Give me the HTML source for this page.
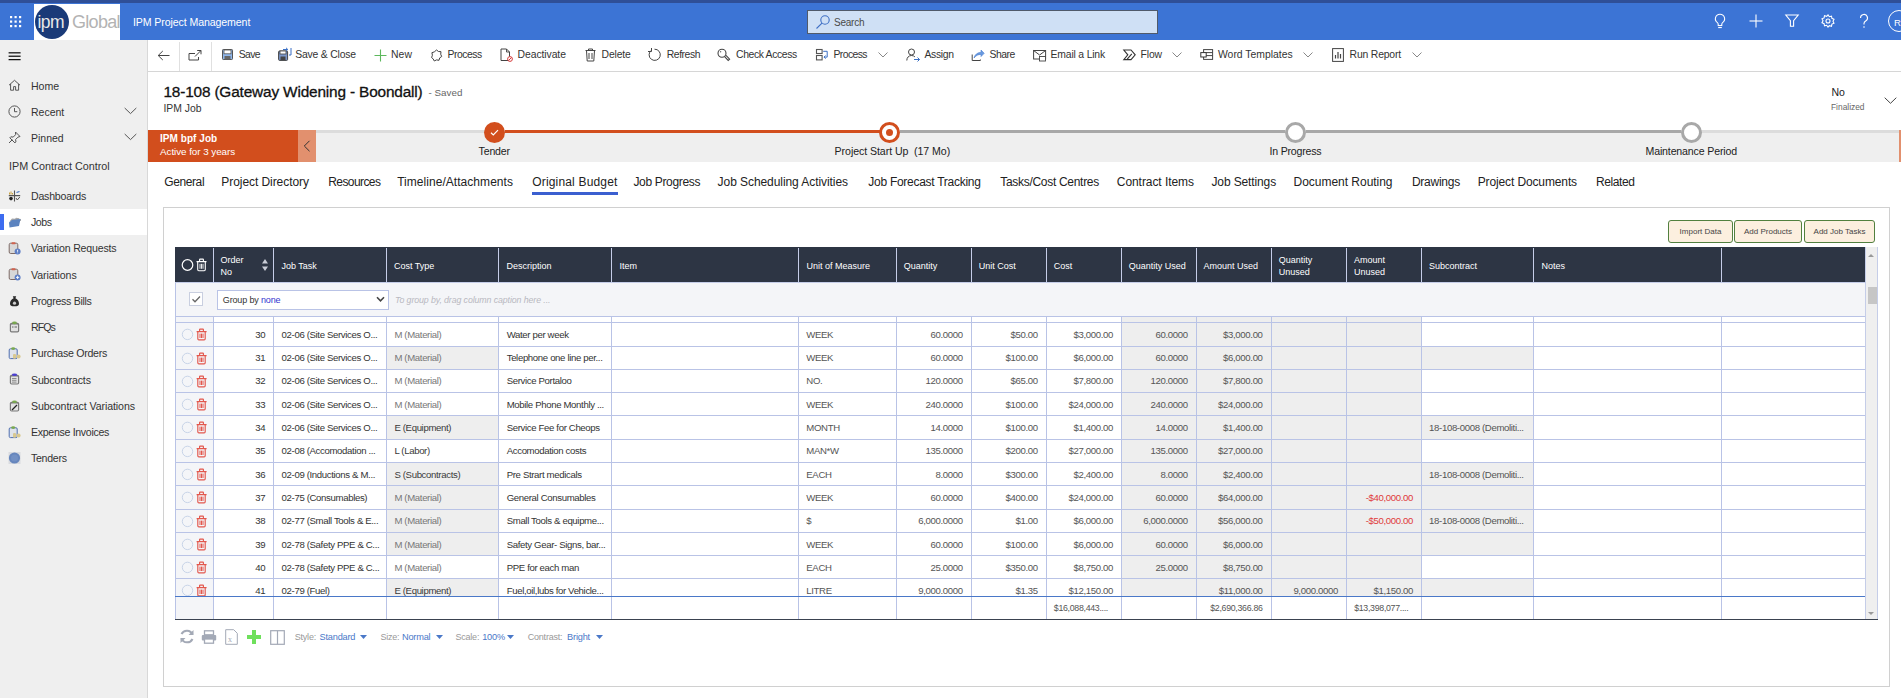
<!DOCTYPE html><html><head><meta charset="utf-8"><style>
html,body{margin:0;padding:0;width:1901px;height:698px;overflow:hidden;background:#fff;font-family:"Liberation Sans",sans-serif;}
.a{position:absolute;}
.t{position:absolute;height:20px;line-height:20px;white-space:nowrap;}
svg.a{overflow:visible}
</style></head><body>
<div class="a" style="left:0px;top:0px;width:1901px;height:40px;background:#3c74d5"></div>
<div class="a" style="left:0px;top:0px;width:1901px;height:3px;background:#2f4f97"></div>
<svg class="a" style="left:0px;top:0px;" width="34" height="40" viewBox="0 0 34 40"><rect x="10.0" y="16.0" width="2.2" height="2.2" fill="#fff"/><rect x="10.0" y="20.5" width="2.2" height="2.2" fill="#fff"/><rect x="10.0" y="25.0" width="2.2" height="2.2" fill="#fff"/><rect x="14.5" y="16.0" width="2.2" height="2.2" fill="#fff"/><rect x="14.5" y="20.5" width="2.2" height="2.2" fill="#fff"/><rect x="14.5" y="25.0" width="2.2" height="2.2" fill="#fff"/><rect x="19.0" y="16.0" width="2.2" height="2.2" fill="#fff"/><rect x="19.0" y="20.5" width="2.2" height="2.2" fill="#fff"/><rect x="19.0" y="25.0" width="2.2" height="2.2" fill="#fff"/></svg>
<div class="a" style="left:34px;top:4px;width:86px;height:36px;background:#fff"></div>
<div class="a" style="left:35px;top:5px;width:34px;height:34px;background:#1a3a78;border-radius:50%"></div>
<div class="t" style="left:37.5px;top:12.00px;font-size:17.5px;color:#e8e8e8;font-weight:normal;letter-spacing:-0.6px;">ipm</div>
<div class="t" style="left:72px;top:11.80px;font-size:18px;color:#b3b3b3;font-weight:normal;letter-spacing:-0.7px;">Global</div>
<div class="a" style="left:120px;top:3px;width:13px;height:37px;background:#3c74d5"></div>
<div class="t" style="left:133px;top:11.70px;font-size:10.6px;color:#ffffff;font-weight:normal;letter-spacing:-0.104px;">IPM Project Management</div>
<div class="a" style="left:807px;top:10px;width:349px;height:22px;background:#cfe0f5;border:1px solid #505a6a"></div>
<svg class="a" style="left:814px;top:14px;" width="18" height="16" viewBox="0 0 18 16"><circle cx="11" cy="6" r="4.2" fill="none" stroke="#3e6fc4" stroke-width="1.1"/><line x1="8" y1="9.2" x2="2.5" y2="14.5" stroke="#3e6fc4" stroke-width="1.1"/></svg>
<div class="t" style="left:834px;top:12.80px;font-size:10px;color:#4a4a4a;font-weight:normal;letter-spacing:-0.247px;">Search</div>
<svg class="a" style="left:1713px;top:13px;" width="14" height="16" viewBox="0 0 14 16"><path d="M7 1.2a4.6 4.6 0 0 0-2.6 8.4c.5.4.8 1 .8 1.6v1.3h3.6v-1.3c0-.6.3-1.2.8-1.6A4.6 4.6 0 0 0 7 1.2z" fill="none" stroke="#fff" stroke-width="1.1"/><line x1="5.2" y1="14.5" x2="8.8" y2="14.5" stroke="#fff" stroke-width="1.2"/></svg>
<svg class="a" style="left:1749px;top:14px;" width="14" height="14" viewBox="0 0 14 14"><line x1="7" y1="0.5" x2="7" y2="13.5" stroke="#fff" stroke-width="1.1"/><line x1="0.5" y1="7" x2="13.5" y2="7" stroke="#fff" stroke-width="1.1"/></svg>
<svg class="a" style="left:1785px;top:14px;" width="14" height="14" viewBox="0 0 14 14"><path d="M0.8 1h12.4l-4.6 5.6v5.6h-3.2v-5.6z" fill="none" stroke="#fff" stroke-width="1.1"/></svg>
<svg class="a" style="left:1821px;top:14px;" width="14" height="14" viewBox="0 0 14 14"><circle cx="7" cy="7" r="2" fill="none" stroke="#fff" stroke-width="1.1"/><path d="M7 0.8l1.3 1.9 2.2-.6.4 2.2 2.1.9-1 2 1 2-2.1.9-.4 2.2-2.2-.6L7 13.2l-1.3-1.9-2.2.6-.4-2.2-2.1-.9 1-2-1-2 2.1-.9.4-2.2 2.2.6z" fill="none" stroke="#fff" stroke-width="1.1"/></svg>
<svg class="a" style="left:1859px;top:14px;" width="10" height="14" viewBox="0 0 10 14"><path d="M1.5 4a3.5 3.5 0 1 1 5.2 3c-1 .6-1.7 1.2-1.7 2.5v1" fill="none" stroke="#fff" stroke-width="1.1"/><circle cx="5" cy="13" r=".8" fill="#fff"/></svg>
<div class="a" style="left:1888px;top:10px;width:22px;height:22px;border:1.3px solid #fff;border-radius:50%;box-sizing:border-box"></div>
<div class="t" style="left:1894px;top:12.50px;font-size:9.5px;color:#fff;font-weight:normal;">R</div>
<div class="a" style="left:0px;top:40px;width:147px;height:658px;background:#efefef"></div>
<div class="a" style="left:147px;top:40px;width:1px;height:658px;background:#d8d8d8"></div>
<svg class="a" style="left:8px;top:50px;" width="14" height="12" viewBox="0 0 14 12"><rect x="0.6" y="2.2" width="12" height="1.25" fill="#111"/><rect x="0.6" y="5.6" width="12" height="1.25" fill="#111"/><rect x="0.6" y="9" width="12" height="1.25" fill="#111"/></svg>
<svg class="a" style="left:8px;top:79px;" width="13" height="12" viewBox="0 0 13 12"><path d="M1 6.2L6.5 1.3 12 6.2M2.6 5v6.2h3v-3.6h2v3.6h3V5" fill="none" stroke="#555" stroke-width="1"/></svg>
<div class="t" style="left:31px;top:75.50px;font-size:10.6px;color:#333;font-weight:normal;letter-spacing:-0.043px;">Home</div>
<svg class="a" style="left:8px;top:105px;" width="13" height="13" viewBox="0 0 13 13"><circle cx="6.5" cy="6.5" r="5.6" fill="none" stroke="#555" stroke-width="1"/><path d="M6.5 3v3.7h2.8" fill="none" stroke="#555" stroke-width="1"/></svg>
<div class="t" style="left:31px;top:101.50px;font-size:10.5px;color:#333;font-weight:normal;">Recent</div>
<svg class="a" style="left:124px;top:107px;" width="13" height="8" viewBox="0 0 13 8"><path d="M0.7 1L6.5 6.6 12.3 1" fill="none" stroke="#555" stroke-width="1"/></svg>
<svg class="a" style="left:8px;top:131px;" width="13" height="13" viewBox="0 0 13 13"><path d="M7.5 1l4.5 4.5-2 .6-2.4 2.4.3 2.4-1 1L1.8 6.8l1-1 2.4.3 2.4-2.4zM4.3 8.7L1 12" fill="none" stroke="#555" stroke-width="1"/></svg>
<div class="t" style="left:31px;top:127.50px;font-size:10.5px;color:#333;font-weight:normal;">Pinned</div>
<svg class="a" style="left:124px;top:133px;" width="13" height="8" viewBox="0 0 13 8"><path d="M0.7 1L6.5 6.6 12.3 1" fill="none" stroke="#555" stroke-width="1"/></svg>
<div class="t" style="left:9px;top:156.30px;font-size:10.8px;color:#333;font-weight:normal;letter-spacing:-0.007px;">IPM Contract Control</div>
<div class="a" style="left:0px;top:209px;width:147px;height:26px;background:#ffffff"></div>
<div class="a" style="left:0px;top:214px;width:4px;height:16px;background:#3d6cf0"></div>
<div class="t" style="left:31px;top:186.20px;font-size:10.6px;color:#333;font-weight:normal;letter-spacing:-0.215px;">Dashboards</div>
<div class="t" style="left:31px;top:212.30px;font-size:10.6px;color:#333;font-weight:normal;letter-spacing:-0.422px;">Jobs</div>
<div class="t" style="left:31px;top:238.40px;font-size:10.6px;color:#333;font-weight:normal;letter-spacing:-0.182px;">Variation Requests</div>
<div class="t" style="left:31px;top:264.60px;font-size:10.6px;color:#333;font-weight:normal;letter-spacing:-0.064px;">Variations</div>
<div class="t" style="left:31px;top:291.00px;font-size:10.6px;color:#333;font-weight:normal;letter-spacing:-0.299px;">Progress Bills</div>
<div class="t" style="left:31px;top:317.20px;font-size:10.6px;color:#333;font-weight:normal;letter-spacing:-0.918px;">RFQs</div>
<div class="t" style="left:31px;top:343.40px;font-size:10.6px;color:#333;font-weight:normal;letter-spacing:-0.274px;">Purchase Orders</div>
<div class="t" style="left:31px;top:369.60px;font-size:10.6px;color:#333;font-weight:normal;letter-spacing:-0.172px;">Subcontracts</div>
<div class="t" style="left:31px;top:396.00px;font-size:10.6px;color:#333;font-weight:normal;letter-spacing:-0.084px;">Subcontract Variations</div>
<div class="t" style="left:31px;top:422.20px;font-size:10.6px;color:#333;font-weight:normal;letter-spacing:-0.317px;">Expense Invoices</div>
<div class="t" style="left:31px;top:448.40px;font-size:10.6px;color:#333;font-weight:normal;letter-spacing:-0.287px;">Tenders</div>
<svg class="a" style="left:8px;top:190px;" width="13" height="13" viewBox="0 0 13 13"><path d="M6.5 0.5v11M0.8 5.6h11.4" stroke="#555" stroke-width="1.1"/><path d="M1.5 4.5v-2M3 4.5V1.5M4.5 4.5V3" stroke="#c8a040" stroke-width="1"/><path d="M8.5 2.5l3-1" stroke="#3a6fc4" stroke-width="1.2"/><circle cx="3" cy="8.6" r="1.8" fill="#222"/><path d="M8 8l1.3 2 2.5-3" fill="none" stroke="#555" stroke-width="1"/></svg>
<svg class="a" style="left:8px;top:216px;" width="13" height="13" viewBox="0 0 13 13"><path d="M1.5 5.5L4 2.5l3 .2 1-1 3.5.5-1.5 3z" fill="#a8a8a8"/><path d="M1 6.5l3-2.5 8.5-1L11 10 1.5 11.5z" fill="#5b83bf"/><path d="M12 2.8l.8 1.7-.6.2z" fill="#333"/></svg>
<svg class="a" style="left:8px;top:242px;" width="13" height="13" viewBox="0 0 13 13"><rect x="1.2" y="1.2" width="8.6" height="10.3" rx="1.5" fill="#d8d8d8" stroke="#7d6a66" stroke-width="1"/><rect x="3.5" y="0.3" width="4" height="2" rx="0.8" fill="#d0624e"/><circle cx="9.6" cy="9.4" r="3" fill="#5e7fc6"/><path d="M9.6 7.8v2M9.6 10.6v.6" stroke="#fff" stroke-width="0.9"/></svg>
<svg class="a" style="left:8px;top:268px;" width="13" height="13" viewBox="0 0 13 13"><rect x="1.2" y="1.2" width="8.6" height="10.3" rx="1.5" fill="#d8d8d8" stroke="#7d6a66" stroke-width="1"/><rect x="3.5" y="0.3" width="4" height="2" rx="0.8" fill="#d0624e"/><circle cx="9.6" cy="9.4" r="3" fill="#5e7fc6"/><path d="M9.6 7.8v3.2M8 9.4h3.2" stroke="#fff" stroke-width="0.9"/></svg>
<svg class="a" style="left:8px;top:295px;" width="13" height="13" viewBox="0 0 13 13"><path d="M4.8 1.2h3.4L7.4 3.3c2.4 1 3.6 3.3 3.6 5.4 0 1.8-1.4 2.6-4.5 2.6S2 10.5 2 8.7c0-2.1 1.2-4.4 3.6-5.4z" fill="#2a2a2a"/><circle cx="6.5" cy="8.2" r="1.6" fill="#cfcfcf"/></svg>
<svg class="a" style="left:8px;top:321px;" width="13" height="13" viewBox="0 0 13 13"><rect x="1.8" y="1.8" width="9.4" height="9.8" rx="1.8" fill="#7a7a7a"/><rect x="3" y="3.6" width="7" height="6.6" rx="0.6" fill="#e2e2e2"/><ellipse cx="6.5" cy="1.8" rx="2.4" ry="1.4" fill="#79a84e"/><path d="M4 6h1.5M6.5 6h2.5" stroke="#555" stroke-width="0.9"/></svg>
<svg class="a" style="left:8px;top:347px;" width="13" height="13" viewBox="0 0 13 13"><rect x="1.2" y="1.8" width="8" height="9.8" rx="1.2" fill="#dfe3ea" stroke="#4f6fb0" stroke-width="1"/><ellipse cx="5.2" cy="1.6" rx="2" ry="1.3" fill="#79a84e"/><rect x="5" y="7" width="3" height="4.8" rx="1" fill="#d8c890"/><circle cx="10.6" cy="9.6" r="2" fill="#d8c890"/></svg>
<svg class="a" style="left:8px;top:373px;" width="13" height="13" viewBox="0 0 13 13"><rect x="1.8" y="1.8" width="9.4" height="9.8" rx="1.8" fill="#7a7a7a"/><rect x="3" y="3.4" width="7" height="7" rx="0.6" fill="#e2e2e2"/><ellipse cx="6.5" cy="1.7" rx="2.6" ry="1.3" fill="#4b3fd0"/><path d="M4 5.5h4.5M4 7.3h4.5M4 9.1h4.5" stroke="#777" stroke-width="0.8"/></svg>
<svg class="a" style="left:8px;top:400px;" width="13" height="13" viewBox="0 0 13 13"><rect x="1.8" y="1.8" width="9.4" height="9.8" rx="1.8" fill="#7a7a7a"/><rect x="3" y="3.4" width="7" height="7" rx="0.6" fill="#e2e2e2"/><ellipse cx="6.5" cy="1.7" rx="2.4" ry="1.3" fill="#79a84e"/><path d="M4 10l5-5" stroke="#222" stroke-width="1.2"/></svg>
<svg class="a" style="left:8px;top:426px;" width="13" height="13" viewBox="0 0 13 13"><rect x="1.2" y="1.8" width="8" height="9.8" rx="1.2" fill="#dfe3ea" stroke="#4f6fb0" stroke-width="1"/><ellipse cx="5.2" cy="1.6" rx="2" ry="1.3" fill="#79a84e"/><rect x="5" y="7" width="3" height="4.8" rx="1" fill="#d8c890"/><circle cx="10.6" cy="9.6" r="2" fill="#d8c890"/></svg>
<svg class="a" style="left:8px;top:452px;" width="13" height="13" viewBox="0 0 13 13"><rect x="0.5" y="0" width="12" height="12" fill="#d9dbe0"/><circle cx="6.5" cy="6" r="5.6" fill="#6686bd"/><circle cx="6.5" cy="6" r="3.5" fill="#7290c4"/></svg>
<div class="a" style="left:148px;top:40px;width:1753px;height:32px;background:#fff"></div>
<div class="a" style="left:148px;top:71px;width:1753px;height:1px;background:#d6d6d6"></div>
<div class="a" style="left:179px;top:42px;width:1px;height:29px;background:#e0e0e0"></div>
<div class="a" style="left:211px;top:42px;width:1px;height:29px;background:#e0e0e0"></div>
<svg class="a" style="left:157px;top:50px;" width="13" height="11" viewBox="0 0 13 11"><path d="M12.5 5.5H1.2M5.8 1L1.2 5.5 5.8 10" fill="none" stroke="#444" stroke-width="1"/></svg>
<svg class="a" style="left:188px;top:49px;" width="14" height="12" viewBox="0 0 14 12"><path d="M1 4.5h6M1 4.5v6.5h9.5V8" fill="none" stroke="#444" stroke-width="1"/><path d="M7 7.5l5.8-5.8M9.2 1.5h3.8v3.8" fill="none" stroke="#444" stroke-width="1"/></svg>
<div class="t" style="left:238.7px;top:44.90px;font-size:10.4px;color:#333;font-weight:normal;letter-spacing:-0.601px;">Save</div>
<div class="t" style="left:295.3px;top:44.90px;font-size:10.4px;color:#333;font-weight:normal;letter-spacing:-0.2px;">Save &amp; Close</div>
<div class="t" style="left:391px;top:44.90px;font-size:10.4px;color:#333;font-weight:normal;letter-spacing:0.066px;">New</div>
<div class="t" style="left:447.5px;top:44.90px;font-size:10.4px;color:#333;font-weight:normal;letter-spacing:-0.467px;">Process</div>
<div class="t" style="left:517.6px;top:44.90px;font-size:10.4px;color:#333;font-weight:normal;letter-spacing:-0.083px;">Deactivate</div>
<div class="t" style="left:601.5px;top:44.90px;font-size:10.4px;color:#333;font-weight:normal;letter-spacing:-0.127px;">Delete</div>
<div class="t" style="left:666.8px;top:44.90px;font-size:10.4px;color:#333;font-weight:normal;letter-spacing:-0.459px;">Refresh</div>
<div class="t" style="left:736px;top:44.90px;font-size:10.4px;color:#333;font-weight:normal;letter-spacing:-0.359px;">Check Access</div>
<div class="t" style="left:833.5px;top:44.90px;font-size:10.4px;color:#333;font-weight:normal;letter-spacing:-0.581px;">Process</div>
<div class="t" style="left:924.4px;top:44.90px;font-size:10.4px;color:#333;font-weight:normal;letter-spacing:-0.302px;">Assign</div>
<div class="t" style="left:989.4px;top:44.90px;font-size:10.4px;color:#333;font-weight:normal;letter-spacing:-0.43px;">Share</div>
<div class="t" style="left:1050.6px;top:44.90px;font-size:10.4px;color:#333;font-weight:normal;letter-spacing:-0.187px;">Email a Link</div>
<div class="t" style="left:1140.5px;top:44.90px;font-size:10.4px;color:#333;font-weight:normal;letter-spacing:-0.114px;">Flow</div>
<div class="t" style="left:1218px;top:44.90px;font-size:10.4px;color:#333;font-weight:normal;letter-spacing:-0.004px;">Word Templates</div>
<div class="t" style="left:1349.6px;top:44.90px;font-size:10.4px;color:#333;font-weight:normal;letter-spacing:-0.178px;">Run Report</div>
<svg class="a" style="left:222px;top:49px;" width="11" height="11" viewBox="0 0 11 11"><rect x="0.5" y="0.5" width="10" height="10" rx="0.8" fill="#8fb6ea" stroke="#555" stroke-width="1"/><rect x="2" y="1" width="7" height="3.8" fill="#fff" stroke="#555" stroke-width="0.8"/><rect x="2.5" y="7" width="6" height="3.5" fill="#666"/></svg>
<svg class="a" style="left:278px;top:47px;" width="14" height="14" viewBox="0 0 14 14"><rect x="0.6" y="4" width="9" height="9.4" rx="1" fill="#7b96c8" stroke="#444" stroke-width="1"/><rect x="2" y="4" width="6" height="3" fill="#fff" stroke="#444" stroke-width="0.8"/><rect x="2.5" y="9.5" width="5" height="3.5" fill="#444"/><path d="M5 2.5h4.5M8 0.8l1.8 1.7L8 4.2M13 1v7h-2" fill="none" stroke="#3a6fc4" stroke-width="1"/></svg>
<svg class="a" style="left:374px;top:49px;" width="13" height="13" viewBox="0 0 13 13"><path d="M6.5 0.5v12M0.5 6.5h12" stroke="#5cb85c" stroke-width="1.1"/></svg>
<svg class="a" style="left:431px;top:49px;" width="11" height="13" viewBox="0 0 11 13"><path d="M5.5 1l2 1.5 2.5.2-.3 2.5 1 2.3-2 1.4-.7 2.4-2.5-.4-2.2 1.1-1.2-2.2L.6 8.6l.8-2.4L.9 3.7l2.4-.8z" fill="none" stroke="#444" stroke-width="1"/></svg>
<svg class="a" style="left:500px;top:48px;" width="13" height="14" viewBox="0 0 13 14"><path d="M1 1h5.5l3 3v8.5H1z" fill="none" stroke="#444" stroke-width="1"/><path d="M6.5 1v3h3" fill="none" stroke="#444" stroke-width="0.9"/><circle cx="10" cy="11" r="2.4" fill="#fff" stroke="#d63a3a" stroke-width="1"/><path d="M8.5 12.5l3-3" stroke="#d63a3a" stroke-width="1"/></svg>
<svg class="a" style="left:585px;top:48px;" width="11" height="14" viewBox="0 0 11 14"><path d="M0.5 2.5h10M3.5 2.5V1h4v1.5M1.5 2.5l.7 10.5h6.6l.7-10.5M4 5v6M7 5v6" fill="none" stroke="#444" stroke-width="1"/></svg>
<svg class="a" style="left:648px;top:48px;" width="13" height="14" viewBox="0 0 13 14"><path d="M3.5 2.2A5.6 5.6 0 1 0 6.5 1.2" fill="none" stroke="#444" stroke-width="1"/><path d="M3.5 0v3.5H0" fill="none" stroke="#444" stroke-width="1"/></svg>
<svg class="a" style="left:717px;top:48px;" width="14" height="14" viewBox="0 0 14 14"><circle cx="5" cy="5.2" r="4" fill="none" stroke="#444" stroke-width="1.1"/><circle cx="3.6" cy="3.8" r=".7" fill="#666"/><path d="M7.6 8.6L11.2 12.4L12.6 11.1L9 7.3" fill="none" stroke="#444" stroke-width="1.1"/></svg>
<svg class="a" style="left:815px;top:48px;" width="14" height="13" viewBox="0 0 14 13"><rect x="1.5" y="1.5" width="5.6" height="4" fill="none" stroke="#555" stroke-width="1.1"/><rect x="1.5" y="7.5" width="5.6" height="4.4" fill="none" stroke="#555" stroke-width="1.1"/><path d="M8.2 3.3h4v5.8H9M10.6 7.5L9 9.1l1.6 1.6" fill="none" stroke="#3a6fc4" stroke-width="1"/></svg>
<svg class="a" style="left:878px;top:52px;" width="10" height="6" viewBox="0 0 10 6"><path d="M0.5 0.5l4.5 4.5 4.5-4.5" fill="none" stroke="#888" stroke-width="1"/></svg>
<svg class="a" style="left:906px;top:48px;" width="14" height="14" viewBox="0 0 14 14"><circle cx="5.5" cy="4" r="3" fill="none" stroke="#444" stroke-width="1"/><path d="M0.8 12.5c0-3 2-5 4.7-5 1.5 0 2.6.5 3.4 1.4" fill="none" stroke="#444" stroke-width="1"/><path d="M8 11.5h5.5M11.5 9.5l2 2-2 2" fill="none" stroke="#3a6fc4" stroke-width="1"/></svg>
<svg class="a" style="left:971px;top:48px;" width="14" height="14" viewBox="0 0 14 14"><path d="M1.2 6.5v6h8.2v-1" fill="none" stroke="#444" stroke-width="1"/><path d="M3 10c.8-3.6 3.6-5.6 7-5.6V2l3.2 3.3-3.2 3.3V6.4c-2.8 0-5 1-7 3.6z" fill="#6a9ae0" stroke="#4a7fd0" stroke-width="0.6"/></svg>
<svg class="a" style="left:1033px;top:49px;" width="14" height="13" viewBox="0 0 14 13"><rect x="0.6" y="1.5" width="12" height="8.5" fill="none" stroke="#444" stroke-width="1"/><path d="M0.6 1.5l6 4.5 6-4.5" fill="none" stroke="#444" stroke-width="1"/><rect x="6.5" y="7.5" width="6" height="4.5" fill="#fff" stroke="#444" stroke-width="0.9"/></svg>
<svg class="a" style="left:1123px;top:49px;" width="14" height="12" viewBox="0 0 14 12"><path d="M0.8 1h7.2l4.2 4.8-4.2 4.8H0.8l4-4.8z" fill="none" stroke="#333" stroke-width="1.1"/><path d="M4.2 10.2l4.6-5.4" stroke="#333" stroke-width="1.1"/></svg>
<svg class="a" style="left:1172px;top:52px;" width="10" height="6" viewBox="0 0 10 6"><path d="M0.5 0.5l4.5 4.5 4.5-4.5" fill="none" stroke="#888" stroke-width="1"/></svg>
<svg class="a" style="left:1200px;top:49px;" width="14" height="12" viewBox="0 0 14 12"><rect x="3.6" y="0.6" width="9" height="9.8" fill="none" stroke="#444" stroke-width="1"/><path d="M3.6 3.6h9M6 6.6h6.6" stroke="#444" stroke-width="1"/><rect x="0.8" y="3.6" width="5.4" height="4.4" fill="#fff" stroke="#333" stroke-width="1"/></svg>
<svg class="a" style="left:1303px;top:52px;" width="10" height="6" viewBox="0 0 10 6"><path d="M0.5 0.5l4.5 4.5 4.5-4.5" fill="none" stroke="#888" stroke-width="1"/></svg>
<svg class="a" style="left:1332px;top:48px;" width="12" height="14" viewBox="0 0 12 14"><rect x="0.6" y="0.6" width="10.8" height="12.8" fill="none" stroke="#444" stroke-width="1"/><path d="M3.5 10.5V7M6 10.5V4M8.5 10.5V6" stroke="#444" stroke-width="1.2"/></svg>
<svg class="a" style="left:1412px;top:52px;" width="10" height="6" viewBox="0 0 10 6"><path d="M0.5 0.5l4.5 4.5 4.5-4.5" fill="none" stroke="#888" stroke-width="1"/></svg>
<div class="t" style="left:163.4px;top:81.60px;font-size:15.4px;color:#111;font-weight:normal;letter-spacing:-0.168px;-webkit-text-stroke:0.3px #111;">18-108 (Gateway Widening - Boondall)</div>
<div class="t" style="left:428.6px;top:83.20px;font-size:9.8px;color:#666;font-weight:normal;">- Saved</div>
<div class="t" style="left:163.4px;top:99.00px;font-size:10.4px;color:#333;font-weight:normal;">IPM Job</div>
<div class="t" style="left:1831.5px;top:82.10px;font-size:10.5px;color:#222;font-weight:normal;">No</div>
<div class="t" style="left:1831px;top:96.50px;font-size:8.4px;color:#666;font-weight:normal;">Finalized</div>
<svg class="a" style="left:1884px;top:97px;" width="13" height="7" viewBox="0 0 13 7"><path d="M0.7 0.7L6.5 6.3 12.3 0.7" fill="none" stroke="#444" stroke-width="1"/></svg>
<div class="a" style="left:148px;top:130px;width:1753px;height:32px;background:#efefef"></div>
<div class="a" style="left:316px;top:130px;width:1585px;height:3px;background:#dcdcdc"></div>
<div class="a" style="left:148px;top:130px;width:150px;height:32px;background:#d24e1d"></div>
<div class="a" style="left:298px;top:130px;width:18px;height:32px;background:#e2906e"></div>
<svg class="a" style="left:303px;top:139.5px;" width="8" height="12" viewBox="0 0 8 12"><path d="M6.5 0.8L1.3 6l5.2 5.2" fill="none" stroke="#333" stroke-width="1"/></svg>
<div class="t" style="left:160px;top:129.00px;font-size:10px;color:#fff;font-weight:bold;letter-spacing:0.049px;">IPM bpf Job</div>
<div class="t" style="left:160px;top:142.40px;font-size:9.9px;color:#fff;font-weight:normal;letter-spacing:-0.065px;">Active for 3 years</div>
<div class="a" style="left:1899px;top:130px;width:2px;height:32px;background:#e2906e"></div>
<div class="a" style="left:505px;top:130px;width:375px;height:3px;background:#d24e1d"></div>
<div class="a" style="left:900px;top:130px;width:385px;height:3px;background:#a8a8a8"></div>
<div class="a" style="left:1306px;top:130px;width:375px;height:3px;background:#a8a8a8"></div>
<div class="a" style="left:484px;top:122px;width:21px;height:21px;background:#d24e1d;border-radius:50%"></div>
<svg class="a" style="left:488px;top:126px;" width="13" height="13" viewBox="0 0 13 13"><path d="M3 6.8l2.3 2.2L10 4.2" fill="none" stroke="#fff" stroke-width="1.2"/></svg>
<div class="a" style="left:879px;top:122px;width:21px;height:21px;background:#fff;border:3px solid #d24e1d;border-radius:50%;box-sizing:border-box"></div>
<div class="a" style="left:886px;top:129px;width:7px;height:7px;background:#d24e1d;border-radius:50%"></div>
<div class="a" style="left:1285px;top:122px;width:21px;height:21px;background:#fff;border:3px solid #a8a8a8;border-radius:50%;box-sizing:border-box"></div>
<div class="a" style="left:1681px;top:122px;width:21px;height:21px;background:#fff;border:3px solid #a8a8a8;border-radius:50%;box-sizing:border-box"></div>
<div class="t" style="left:478.6px;top:141.00px;font-size:10.6px;color:#222;font-weight:normal;letter-spacing:-0.201px;">Tender</div>
<div class="t" style="left:834.6px;top:141.00px;font-size:10.6px;color:#222;font-weight:normal;letter-spacing:-0.065px;">Project Start Up&nbsp; (17 Mo)</div>
<div class="t" style="left:1269.6px;top:141.00px;font-size:10.6px;color:#222;font-weight:normal;letter-spacing:-0.227px;">In Progress</div>
<div class="t" style="left:1645.5px;top:141.00px;font-size:10.6px;color:#222;font-weight:normal;letter-spacing:-0.154px;">Maintenance Period</div>
<div class="t" style="left:164.2px;top:171.80px;font-size:12px;color:#222;font-weight:normal;letter-spacing:-0.384px;">General</div>
<div class="t" style="left:221.3px;top:171.80px;font-size:12px;color:#222;font-weight:normal;letter-spacing:-0.064px;">Project Directory</div>
<div class="t" style="left:328.3px;top:171.80px;font-size:12px;color:#222;font-weight:normal;letter-spacing:-0.595px;">Resources</div>
<div class="t" style="left:397.2px;top:171.80px;font-size:12px;color:#222;font-weight:normal;letter-spacing:0.043px;">Timeline/Attachments</div>
<div class="t" style="left:532.2px;top:171.80px;font-size:12px;color:#222;font-weight:normal;letter-spacing:0.179px;">Original Budget</div>
<div class="t" style="left:633.4px;top:171.80px;font-size:12px;color:#222;font-weight:normal;letter-spacing:-0.325px;">Job Progress</div>
<div class="t" style="left:717.6px;top:171.80px;font-size:12px;color:#222;font-weight:normal;letter-spacing:-0.067px;">Job Scheduling Activities</div>
<div class="t" style="left:868.3px;top:171.80px;font-size:12px;color:#222;font-weight:normal;letter-spacing:-0.274px;">Job Forecast Tracking</div>
<div class="t" style="left:1000.3px;top:171.80px;font-size:12px;color:#222;font-weight:normal;letter-spacing:-0.302px;">Tasks/Cost Centres</div>
<div class="t" style="left:1116.8px;top:171.80px;font-size:12px;color:#222;font-weight:normal;letter-spacing:-0.066px;">Contract Items</div>
<div class="t" style="left:1211.5px;top:171.80px;font-size:12px;color:#222;font-weight:normal;letter-spacing:-0.128px;">Job Settings</div>
<div class="t" style="left:1293.6px;top:171.80px;font-size:12px;color:#222;font-weight:normal;letter-spacing:-0.03px;">Document Routing</div>
<div class="t" style="left:1411.9px;top:171.80px;font-size:12px;color:#222;font-weight:normal;letter-spacing:-0.239px;">Drawings</div>
<div class="t" style="left:1477.7px;top:171.80px;font-size:12px;color:#222;font-weight:normal;letter-spacing:-0.122px;">Project Documents</div>
<div class="t" style="left:1595.9px;top:171.80px;font-size:12px;color:#222;font-weight:normal;letter-spacing:-0.38px;">Related</div>
<div class="a" style="left:532px;top:192px;width:86px;height:3px;background:#3b5fd0"></div>
<div class="a" style="left:163px;top:207px;width:1727px;height:480px;border:1px solid #d0d0d0;box-sizing:border-box;background:#fff"></div>
<div class="a" style="left:1668px;top:220px;width:65px;height:23px;box-sizing:border-box;border:1.3px solid #52803f;border-radius:3px;background:#fcefdf;color:#444;font-size:8px;line-height:21px;text-align:center;white-space:nowrap">Import Data</div>
<div class="a" style="left:1734px;top:220px;width:68px;height:23px;box-sizing:border-box;border:1.3px solid #52803f;border-radius:3px;background:#fcefdf;color:#444;font-size:8px;line-height:21px;text-align:center;white-space:nowrap">Add Products</div>
<div class="a" style="left:1804px;top:220px;width:71px;height:23px;box-sizing:border-box;border:1.3px solid #52803f;border-radius:3px;background:#fcefdf;color:#444;font-size:8px;line-height:21px;text-align:center;white-space:nowrap">Add Job Tasks</div>
<div class="a" style="left:175px;top:247px;width:1690px;height:35px;background:#2d3544"></div>
<div class="a" style="left:213px;top:248px;width:1px;height:34px;background:#c5cde8"></div>
<div class="a" style="left:273px;top:248px;width:1px;height:34px;background:#c5cde8"></div>
<div class="a" style="left:386px;top:248px;width:1px;height:34px;background:#c5cde8"></div>
<div class="a" style="left:498px;top:248px;width:1px;height:34px;background:#c5cde8"></div>
<div class="a" style="left:611px;top:248px;width:1px;height:34px;background:#c5cde8"></div>
<div class="a" style="left:798px;top:248px;width:1px;height:34px;background:#c5cde8"></div>
<div class="a" style="left:896px;top:248px;width:1px;height:34px;background:#c5cde8"></div>
<div class="a" style="left:971px;top:248px;width:1px;height:34px;background:#c5cde8"></div>
<div class="a" style="left:1046px;top:248px;width:1px;height:34px;background:#c5cde8"></div>
<div class="a" style="left:1121px;top:248px;width:1px;height:34px;background:#c5cde8"></div>
<div class="a" style="left:1196px;top:248px;width:1px;height:34px;background:#c5cde8"></div>
<div class="a" style="left:1271px;top:248px;width:1px;height:34px;background:#c5cde8"></div>
<div class="a" style="left:1346px;top:248px;width:1px;height:34px;background:#c5cde8"></div>
<div class="a" style="left:1421px;top:248px;width:1px;height:34px;background:#c5cde8"></div>
<div class="a" style="left:1533px;top:248px;width:1px;height:34px;background:#c5cde8"></div>
<div class="a" style="left:1721px;top:248px;width:1px;height:34px;background:#c5cde8"></div>
<div class="a" style="left:175px;top:282px;width:1690px;height:1px;background:#c5cde8"></div>
<svg class="a" style="left:181px;top:258px;" width="28" height="14" viewBox="0 0 28 14"><circle cx="6.5" cy="7" r="5.3" fill="none" stroke="#fff" stroke-width="1.2"/><path d="M15.5 3.6h10M18.6 3.6V1.6q0-.5.5-.5h2.8q.5 0 .5.5v2M16.7 3.6v8q0 1.1 1.1 1.1h5.4q1.1 0 1.1-1.1v-8" fill="none" stroke="#fff" stroke-width="1.1"/><path d="M19 5.8v5M20.5 5.8v5M22 5.8v5" stroke="#fff" stroke-width="0.9"/></svg>
<div class="t" style="left:220.5px;top:249.60px;font-size:9px;color:#fff;font-weight:normal;">Order</div>
<div class="t" style="left:220.5px;top:261.50px;font-size:9px;color:#fff;font-weight:normal;">No</div>
<svg class="a" style="left:262px;top:258px;" width="6" height="14" viewBox="0 0 6 14"><path d="M0 5.5L3 1l3 4.5zM0 8.5L3 13l3-4.5z" fill="#c8ccd6"/></svg>
<div class="t" style="left:281.5px;top:256.00px;font-size:9px;color:#fff;font-weight:normal;">Job Task</div>
<div class="t" style="left:394px;top:256.00px;font-size:9px;color:#fff;font-weight:normal;">Cost Type</div>
<div class="t" style="left:506.4px;top:256.00px;font-size:9px;color:#fff;font-weight:normal;">Description</div>
<div class="t" style="left:619.5px;top:256.00px;font-size:9px;color:#fff;font-weight:normal;">Item</div>
<div class="t" style="left:806.5px;top:256.00px;font-size:9px;color:#fff;font-weight:normal;">Unit of Measure</div>
<div class="t" style="left:903.8px;top:256.00px;font-size:9px;color:#fff;font-weight:normal;">Quantity</div>
<div class="t" style="left:978.7px;top:256.00px;font-size:9px;color:#fff;font-weight:normal;">Unit Cost</div>
<div class="t" style="left:1053.7px;top:256.00px;font-size:9px;color:#fff;font-weight:normal;">Cost</div>
<div class="t" style="left:1128.7px;top:256.00px;font-size:9px;color:#fff;font-weight:normal;">Quantity Used</div>
<div class="t" style="left:1203.6px;top:256.00px;font-size:9px;color:#fff;font-weight:normal;">Amount Used</div>
<div class="t" style="left:1429px;top:256.00px;font-size:9px;color:#fff;font-weight:normal;">Subcontract</div>
<div class="t" style="left:1541.6px;top:256.00px;font-size:9px;color:#fff;font-weight:normal;">Notes</div>
<div class="t" style="left:1278.8px;top:249.60px;font-size:9px;color:#fff;font-weight:normal;">Quantity</div>
<div class="t" style="left:1278.8px;top:261.50px;font-size:9px;color:#fff;font-weight:normal;">Unused</div>
<div class="t" style="left:1354px;top:249.60px;font-size:9px;color:#fff;font-weight:normal;">Amount</div>
<div class="t" style="left:1354px;top:261.50px;font-size:9px;color:#fff;font-weight:normal;">Unused</div>
<div class="a" style="left:1865px;top:247px;width:13px;height:372px;background:#efefef;border-left:1px solid #c5cde8;border-right:1px solid #c5cde8;box-sizing:border-box"></div>
<svg class="a" style="left:1867px;top:253px;" width="8" height="5" viewBox="0 0 8 5"><path d="M1 4l3-3 3 3z" fill="#999"/></svg>
<div class="a" style="left:1868px;top:287px;width:9px;height:17px;background:#c6c6c6"></div>
<svg class="a" style="left:1867px;top:611px;" width="8" height="5" viewBox="0 0 8 5"><path d="M1 1l3 3 3-3z" fill="#999"/></svg>
<div class="a" style="left:175px;top:283px;width:1690px;height:33px;background:#f4f5f8"></div>
<div class="a" style="left:175px;top:283px;width:1px;height:336px;background:#b9c3e6"></div>
<div class="a" style="left:189px;top:292px;width:14px;height:14px;background:#fff;border:1px solid #c9cfe0;box-sizing:border-box"></div>
<svg class="a" style="left:191px;top:294px;" width="10" height="10" viewBox="0 0 10 10"><path d="M1.5 5.2l2.5 2.5 5-5.2" fill="none" stroke="#666" stroke-width="1.3"/></svg>
<div class="a" style="left:217px;top:290px;width:172px;height:20px;background:#fff;border:1px solid #b9c3e6;box-sizing:border-box"></div>
<div class="t" style="left:222.8px;top:289.80px;font-size:9px;color:#333;font-weight:normal;letter-spacing:-0.15px;">Group by <span style="color:#3535d0">none</span></div>
<svg class="a" style="left:376px;top:296px;" width="9" height="7" viewBox="0 0 9 7"><path d="M1 1.2l3.5 3.6L8 1.2" fill="none" stroke="#444" stroke-width="1.6"/></svg>
<div class="t" style="left:395px;top:289.80px;font-size:8.8px;color:#b8b8c0;font-weight:normal;letter-spacing:-0.1px;font-style:italic;">To group by, drag column caption here ...</div>
<div class="a" style="left:176px;top:316px;width:1689px;height:280px;overflow:hidden">
<div class="a" style="left:0px;top:0px;width:37px;height:300px;background:#f4f5f8"></div>
<div class="a" style="left:946px;top:0px;width:299px;height:300px;background:#eeeeee"></div>
<div class="a" style="left:211px;top:30px;width:111px;height:23px;background:#eeeeee"></div>
<div class="a" style="left:1246px;top:30px;width:111px;height:23px;background:#eeeeee"></div>
<div class="a" style="left:211px;top:99px;width:111px;height:24px;background:#eeeeee"></div>
<div class="a" style="left:1246px;top:99px;width:111px;height:24px;background:#eeeeee"></div>
<div class="a" style="left:211px;top:146px;width:111px;height:23px;background:#eeeeee"></div>
<div class="a" style="left:1246px;top:146px;width:111px;height:23px;background:#eeeeee"></div>
<div class="a" style="left:211px;top:169px;width:111px;height:24px;background:#eeeeee"></div>
<div class="a" style="left:1246px;top:169px;width:111px;height:24px;background:#eeeeee"></div>
<div class="a" style="left:211px;top:193px;width:111px;height:23px;background:#eeeeee"></div>
<div class="a" style="left:1246px;top:193px;width:111px;height:23px;background:#eeeeee"></div>
<div class="a" style="left:211px;top:216px;width:111px;height:23px;background:#eeeeee"></div>
<div class="a" style="left:1246px;top:216px;width:111px;height:23px;background:#eeeeee"></div>
<div class="a" style="left:211px;top:262px;width:111px;height:24px;background:#eeeeee"></div>
<div class="a" style="left:1246px;top:262px;width:111px;height:24px;background:#eeeeee"></div>
<div class="a" style="left:0px;top:0px;width:1690px;height:1px;background:#b9c3e6"></div>
<div class="a" style="left:0px;top:6px;width:1690px;height:1px;background:#b9c3e6"></div>
<div class="a" style="left:0px;top:30px;width:1690px;height:1px;background:#b9c3e6"></div>
<div class="a" style="left:0px;top:53px;width:1690px;height:1px;background:#b9c3e6"></div>
<div class="a" style="left:0px;top:76px;width:1690px;height:1px;background:#b9c3e6"></div>
<div class="a" style="left:0px;top:99px;width:1690px;height:1px;background:#b9c3e6"></div>
<div class="a" style="left:0px;top:123px;width:1690px;height:1px;background:#b9c3e6"></div>
<div class="a" style="left:0px;top:146px;width:1690px;height:1px;background:#b9c3e6"></div>
<div class="a" style="left:0px;top:169px;width:1690px;height:1px;background:#b9c3e6"></div>
<div class="a" style="left:0px;top:193px;width:1690px;height:1px;background:#b9c3e6"></div>
<div class="a" style="left:0px;top:216px;width:1690px;height:1px;background:#b9c3e6"></div>
<div class="a" style="left:0px;top:239px;width:1690px;height:1px;background:#b9c3e6"></div>
<div class="a" style="left:0px;top:262px;width:1690px;height:1px;background:#b9c3e6"></div>
<div class="a" style="left:0px;top:286px;width:1690px;height:1px;background:#b9c3e6"></div>
<div class="a" style="left:37px;top:0px;width:1px;height:300px;background:#b9c3e6"></div>
<div class="a" style="left:97px;top:0px;width:1px;height:300px;background:#b9c3e6"></div>
<div class="a" style="left:210px;top:0px;width:1px;height:300px;background:#b9c3e6"></div>
<div class="a" style="left:322px;top:0px;width:1px;height:300px;background:#b9c3e6"></div>
<div class="a" style="left:435px;top:0px;width:1px;height:300px;background:#b9c3e6"></div>
<div class="a" style="left:622px;top:0px;width:1px;height:300px;background:#b9c3e6"></div>
<div class="a" style="left:720px;top:0px;width:1px;height:300px;background:#b9c3e6"></div>
<div class="a" style="left:795px;top:0px;width:1px;height:300px;background:#b9c3e6"></div>
<div class="a" style="left:870px;top:0px;width:1px;height:300px;background:#b9c3e6"></div>
<div class="a" style="left:945px;top:0px;width:1px;height:300px;background:#b9c3e6"></div>
<div class="a" style="left:1020px;top:0px;width:1px;height:300px;background:#b9c3e6"></div>
<div class="a" style="left:1095px;top:0px;width:1px;height:300px;background:#b9c3e6"></div>
<div class="a" style="left:1170px;top:0px;width:1px;height:300px;background:#b9c3e6"></div>
<div class="a" style="left:1245px;top:0px;width:1px;height:300px;background:#b9c3e6"></div>
<div class="a" style="left:1357px;top:0px;width:1px;height:300px;background:#b9c3e6"></div>
<div class="a" style="left:1545px;top:0px;width:1px;height:300px;background:#b9c3e6"></div>
<svg class="a" style="left:5px;top:12px" width="28" height="13" viewBox="0 0 28 13"><circle cx="6.5" cy="6.4" r="5.2" fill="none" stroke="#c8d4e8" stroke-width="1"/><path d="M15.6 3.6h10M18.6 3.6V1.6q0-.5.5-.5h2.8q.5 0 .5.5v2M16.8 3.6v7.2q0 1.1 1.1 1.1h5.2q1.1 0 1.1-1.1V3.6" fill="none" stroke="#e2574c" stroke-width="1.15"/><path d="M19 5.6v4.4M20.5 5.6v4.4M22 5.6v4.4" stroke="#e2574c" stroke-width="1"/></svg>
<div class="t" style="right:1599.80px;top:8.90px;font-size:9.6px;color:#333;letter-spacing:-0.35px;">30</div>
<div class="t" style="left:105.60px;top:8.90px;font-size:9.6px;color:#333;letter-spacing:-0.35px;">02-06 (Site Services O...</div>
<div class="t" style="left:218.40px;top:8.90px;font-size:9.6px;color:#777;letter-spacing:-0.35px;">M (Material)</div>
<div class="t" style="left:330.70px;top:8.90px;font-size:9.6px;color:#333;letter-spacing:-0.35px;">Water per week</div>
<div class="t" style="left:630.30px;top:8.90px;font-size:9.6px;color:#555;letter-spacing:-0.35px;">WEEK</div>
<div class="t" style="right:902.20px;top:8.90px;font-size:9.6px;color:#555;letter-spacing:-0.35px;">60.0000</div>
<div class="t" style="right:827.20px;top:8.90px;font-size:9.6px;color:#555;letter-spacing:-0.35px;">$50.00</div>
<div class="t" style="right:752.00px;top:8.90px;font-size:9.6px;color:#555;letter-spacing:-0.35px;">$3,000.00</div>
<div class="t" style="right:677.30px;top:8.90px;font-size:9.6px;color:#555;letter-spacing:-0.35px;">60.0000</div>
<div class="t" style="right:602.40px;top:8.90px;font-size:9.6px;color:#555;letter-spacing:-0.35px;">$3,000.00</div>
<div class="t" style="right:527.10px;top:8.90px;font-size:9.6px;color:#555;letter-spacing:-0.35px;"></div>
<div class="t" style="left:1253.10px;top:8.90px;font-size:9.6px;color:#555;letter-spacing:-0.35px;"></div>
<svg class="a" style="left:5px;top:36px" width="28" height="13" viewBox="0 0 28 13"><circle cx="6.5" cy="6.4" r="5.2" fill="none" stroke="#c8d4e8" stroke-width="1"/><path d="M15.6 3.6h10M18.6 3.6V1.6q0-.5.5-.5h2.8q.5 0 .5.5v2M16.8 3.6v7.2q0 1.1 1.1 1.1h5.2q1.1 0 1.1-1.1V3.6" fill="none" stroke="#e2574c" stroke-width="1.15"/><path d="M19 5.6v4.4M20.5 5.6v4.4M22 5.6v4.4" stroke="#e2574c" stroke-width="1"/></svg>
<div class="t" style="right:1599.80px;top:32.19px;font-size:9.6px;color:#333;letter-spacing:-0.35px;">31</div>
<div class="t" style="left:105.60px;top:32.19px;font-size:9.6px;color:#333;letter-spacing:-0.35px;">02-06 (Site Services O...</div>
<div class="t" style="left:218.40px;top:32.19px;font-size:9.6px;color:#777;letter-spacing:-0.35px;">M (Material)</div>
<div class="t" style="left:330.70px;top:32.19px;font-size:9.6px;color:#333;letter-spacing:-0.35px;">Telephone one line per...</div>
<div class="t" style="left:630.30px;top:32.19px;font-size:9.6px;color:#555;letter-spacing:-0.35px;">WEEK</div>
<div class="t" style="right:902.20px;top:32.19px;font-size:9.6px;color:#555;letter-spacing:-0.35px;">60.0000</div>
<div class="t" style="right:827.20px;top:32.19px;font-size:9.6px;color:#555;letter-spacing:-0.35px;">$100.00</div>
<div class="t" style="right:752.00px;top:32.19px;font-size:9.6px;color:#555;letter-spacing:-0.35px;">$6,000.00</div>
<div class="t" style="right:677.30px;top:32.19px;font-size:9.6px;color:#555;letter-spacing:-0.35px;">60.0000</div>
<div class="t" style="right:602.40px;top:32.19px;font-size:9.6px;color:#555;letter-spacing:-0.35px;">$6,000.00</div>
<div class="t" style="right:527.10px;top:32.19px;font-size:9.6px;color:#555;letter-spacing:-0.35px;"></div>
<div class="t" style="left:1253.10px;top:32.19px;font-size:9.6px;color:#555;letter-spacing:-0.35px;"></div>
<svg class="a" style="left:5px;top:59px" width="28" height="13" viewBox="0 0 28 13"><circle cx="6.5" cy="6.4" r="5.2" fill="none" stroke="#c8d4e8" stroke-width="1"/><path d="M15.6 3.6h10M18.6 3.6V1.6q0-.5.5-.5h2.8q.5 0 .5.5v2M16.8 3.6v7.2q0 1.1 1.1 1.1h5.2q1.1 0 1.1-1.1V3.6" fill="none" stroke="#e2574c" stroke-width="1.15"/><path d="M19 5.6v4.4M20.5 5.6v4.4M22 5.6v4.4" stroke="#e2574c" stroke-width="1"/></svg>
<div class="t" style="right:1599.80px;top:55.48px;font-size:9.6px;color:#333;letter-spacing:-0.35px;">32</div>
<div class="t" style="left:105.60px;top:55.48px;font-size:9.6px;color:#333;letter-spacing:-0.35px;">02-06 (Site Services O...</div>
<div class="t" style="left:218.40px;top:55.48px;font-size:9.6px;color:#777;letter-spacing:-0.35px;">M (Material)</div>
<div class="t" style="left:330.70px;top:55.48px;font-size:9.6px;color:#333;letter-spacing:-0.35px;">Service Portaloo</div>
<div class="t" style="left:630.30px;top:55.48px;font-size:9.6px;color:#555;letter-spacing:-0.35px;">NO.</div>
<div class="t" style="right:902.20px;top:55.48px;font-size:9.6px;color:#555;letter-spacing:-0.35px;">120.0000</div>
<div class="t" style="right:827.20px;top:55.48px;font-size:9.6px;color:#555;letter-spacing:-0.35px;">$65.00</div>
<div class="t" style="right:752.00px;top:55.48px;font-size:9.6px;color:#555;letter-spacing:-0.35px;">$7,800.00</div>
<div class="t" style="right:677.30px;top:55.48px;font-size:9.6px;color:#555;letter-spacing:-0.35px;">120.0000</div>
<div class="t" style="right:602.40px;top:55.48px;font-size:9.6px;color:#555;letter-spacing:-0.35px;">$7,800.00</div>
<div class="t" style="right:527.10px;top:55.48px;font-size:9.6px;color:#555;letter-spacing:-0.35px;"></div>
<div class="t" style="left:1253.10px;top:55.48px;font-size:9.6px;color:#555;letter-spacing:-0.35px;"></div>
<svg class="a" style="left:5px;top:82px" width="28" height="13" viewBox="0 0 28 13"><circle cx="6.5" cy="6.4" r="5.2" fill="none" stroke="#c8d4e8" stroke-width="1"/><path d="M15.6 3.6h10M18.6 3.6V1.6q0-.5.5-.5h2.8q.5 0 .5.5v2M16.8 3.6v7.2q0 1.1 1.1 1.1h5.2q1.1 0 1.1-1.1V3.6" fill="none" stroke="#e2574c" stroke-width="1.15"/><path d="M19 5.6v4.4M20.5 5.6v4.4M22 5.6v4.4" stroke="#e2574c" stroke-width="1"/></svg>
<div class="t" style="right:1599.80px;top:78.77px;font-size:9.6px;color:#333;letter-spacing:-0.35px;">33</div>
<div class="t" style="left:105.60px;top:78.77px;font-size:9.6px;color:#333;letter-spacing:-0.35px;">02-06 (Site Services O...</div>
<div class="t" style="left:218.40px;top:78.77px;font-size:9.6px;color:#777;letter-spacing:-0.35px;">M (Material)</div>
<div class="t" style="left:330.70px;top:78.77px;font-size:9.6px;color:#333;letter-spacing:-0.35px;">Mobile Phone Monthly ...</div>
<div class="t" style="left:630.30px;top:78.77px;font-size:9.6px;color:#555;letter-spacing:-0.35px;">WEEK</div>
<div class="t" style="right:902.20px;top:78.77px;font-size:9.6px;color:#555;letter-spacing:-0.35px;">240.0000</div>
<div class="t" style="right:827.20px;top:78.77px;font-size:9.6px;color:#555;letter-spacing:-0.35px;">$100.00</div>
<div class="t" style="right:752.00px;top:78.77px;font-size:9.6px;color:#555;letter-spacing:-0.35px;">$24,000.00</div>
<div class="t" style="right:677.30px;top:78.77px;font-size:9.6px;color:#555;letter-spacing:-0.35px;">240.0000</div>
<div class="t" style="right:602.40px;top:78.77px;font-size:9.6px;color:#555;letter-spacing:-0.35px;">$24,000.00</div>
<div class="t" style="right:527.10px;top:78.77px;font-size:9.6px;color:#555;letter-spacing:-0.35px;"></div>
<div class="t" style="left:1253.10px;top:78.77px;font-size:9.6px;color:#555;letter-spacing:-0.35px;"></div>
<svg class="a" style="left:5px;top:105px" width="28" height="13" viewBox="0 0 28 13"><circle cx="6.5" cy="6.4" r="5.2" fill="none" stroke="#c8d4e8" stroke-width="1"/><path d="M15.6 3.6h10M18.6 3.6V1.6q0-.5.5-.5h2.8q.5 0 .5.5v2M16.8 3.6v7.2q0 1.1 1.1 1.1h5.2q1.1 0 1.1-1.1V3.6" fill="none" stroke="#e2574c" stroke-width="1.15"/><path d="M19 5.6v4.4M20.5 5.6v4.4M22 5.6v4.4" stroke="#e2574c" stroke-width="1"/></svg>
<div class="t" style="right:1599.80px;top:102.06px;font-size:9.6px;color:#333;letter-spacing:-0.35px;">34</div>
<div class="t" style="left:105.60px;top:102.06px;font-size:9.6px;color:#333;letter-spacing:-0.35px;">02-06 (Site Services O...</div>
<div class="t" style="left:218.40px;top:102.06px;font-size:9.6px;color:#3a3a3a;letter-spacing:-0.35px;">E (Equipment)</div>
<div class="t" style="left:330.70px;top:102.06px;font-size:9.6px;color:#333;letter-spacing:-0.35px;">Service Fee for Cheops</div>
<div class="t" style="left:630.30px;top:102.06px;font-size:9.6px;color:#555;letter-spacing:-0.35px;">MONTH</div>
<div class="t" style="right:902.20px;top:102.06px;font-size:9.6px;color:#555;letter-spacing:-0.35px;">14.0000</div>
<div class="t" style="right:827.20px;top:102.06px;font-size:9.6px;color:#555;letter-spacing:-0.35px;">$100.00</div>
<div class="t" style="right:752.00px;top:102.06px;font-size:9.6px;color:#555;letter-spacing:-0.35px;">$1,400.00</div>
<div class="t" style="right:677.30px;top:102.06px;font-size:9.6px;color:#555;letter-spacing:-0.35px;">14.0000</div>
<div class="t" style="right:602.40px;top:102.06px;font-size:9.6px;color:#555;letter-spacing:-0.35px;">$1,400.00</div>
<div class="t" style="right:527.10px;top:102.06px;font-size:9.6px;color:#555;letter-spacing:-0.35px;"></div>
<div class="t" style="left:1253.10px;top:102.06px;font-size:9.6px;color:#555;letter-spacing:-0.35px;">18-108-0008 (Demoliti...</div>
<svg class="a" style="left:5px;top:129px" width="28" height="13" viewBox="0 0 28 13"><circle cx="6.5" cy="6.4" r="5.2" fill="none" stroke="#c8d4e8" stroke-width="1"/><path d="M15.6 3.6h10M18.6 3.6V1.6q0-.5.5-.5h2.8q.5 0 .5.5v2M16.8 3.6v7.2q0 1.1 1.1 1.1h5.2q1.1 0 1.1-1.1V3.6" fill="none" stroke="#e2574c" stroke-width="1.15"/><path d="M19 5.6v4.4M20.5 5.6v4.4M22 5.6v4.4" stroke="#e2574c" stroke-width="1"/></svg>
<div class="t" style="right:1599.80px;top:125.35px;font-size:9.6px;color:#333;letter-spacing:-0.35px;">35</div>
<div class="t" style="left:105.60px;top:125.35px;font-size:9.6px;color:#333;letter-spacing:-0.35px;">02-08 (Accomodation ...</div>
<div class="t" style="left:218.40px;top:125.35px;font-size:9.6px;color:#3a3a3a;letter-spacing:-0.35px;">L (Labor)</div>
<div class="t" style="left:330.70px;top:125.35px;font-size:9.6px;color:#333;letter-spacing:-0.35px;">Accomodation costs</div>
<div class="t" style="left:630.30px;top:125.35px;font-size:9.6px;color:#555;letter-spacing:-0.35px;">MAN*W</div>
<div class="t" style="right:902.20px;top:125.35px;font-size:9.6px;color:#555;letter-spacing:-0.35px;">135.0000</div>
<div class="t" style="right:827.20px;top:125.35px;font-size:9.6px;color:#555;letter-spacing:-0.35px;">$200.00</div>
<div class="t" style="right:752.00px;top:125.35px;font-size:9.6px;color:#555;letter-spacing:-0.35px;">$27,000.00</div>
<div class="t" style="right:677.30px;top:125.35px;font-size:9.6px;color:#555;letter-spacing:-0.35px;">135.0000</div>
<div class="t" style="right:602.40px;top:125.35px;font-size:9.6px;color:#555;letter-spacing:-0.35px;">$27,000.00</div>
<div class="t" style="right:527.10px;top:125.35px;font-size:9.6px;color:#555;letter-spacing:-0.35px;"></div>
<div class="t" style="left:1253.10px;top:125.35px;font-size:9.6px;color:#555;letter-spacing:-0.35px;"></div>
<svg class="a" style="left:5px;top:152px" width="28" height="13" viewBox="0 0 28 13"><circle cx="6.5" cy="6.4" r="5.2" fill="none" stroke="#c8d4e8" stroke-width="1"/><path d="M15.6 3.6h10M18.6 3.6V1.6q0-.5.5-.5h2.8q.5 0 .5.5v2M16.8 3.6v7.2q0 1.1 1.1 1.1h5.2q1.1 0 1.1-1.1V3.6" fill="none" stroke="#e2574c" stroke-width="1.15"/><path d="M19 5.6v4.4M20.5 5.6v4.4M22 5.6v4.4" stroke="#e2574c" stroke-width="1"/></svg>
<div class="t" style="right:1599.80px;top:148.64px;font-size:9.6px;color:#333;letter-spacing:-0.35px;">36</div>
<div class="t" style="left:105.60px;top:148.64px;font-size:9.6px;color:#333;letter-spacing:-0.35px;">02-09 (Inductions &amp; M...</div>
<div class="t" style="left:218.40px;top:148.64px;font-size:9.6px;color:#3a3a3a;letter-spacing:-0.35px;">S (Subcontracts)</div>
<div class="t" style="left:330.70px;top:148.64px;font-size:9.6px;color:#333;letter-spacing:-0.35px;">Pre Strart medicals</div>
<div class="t" style="left:630.30px;top:148.64px;font-size:9.6px;color:#555;letter-spacing:-0.35px;">EACH</div>
<div class="t" style="right:902.20px;top:148.64px;font-size:9.6px;color:#555;letter-spacing:-0.35px;">8.0000</div>
<div class="t" style="right:827.20px;top:148.64px;font-size:9.6px;color:#555;letter-spacing:-0.35px;">$300.00</div>
<div class="t" style="right:752.00px;top:148.64px;font-size:9.6px;color:#555;letter-spacing:-0.35px;">$2,400.00</div>
<div class="t" style="right:677.30px;top:148.64px;font-size:9.6px;color:#555;letter-spacing:-0.35px;">8.0000</div>
<div class="t" style="right:602.40px;top:148.64px;font-size:9.6px;color:#555;letter-spacing:-0.35px;">$2,400.00</div>
<div class="t" style="right:527.10px;top:148.64px;font-size:9.6px;color:#555;letter-spacing:-0.35px;"></div>
<div class="t" style="left:1253.10px;top:148.64px;font-size:9.6px;color:#555;letter-spacing:-0.35px;">18-108-0008 (Demoliti...</div>
<svg class="a" style="left:5px;top:175px" width="28" height="13" viewBox="0 0 28 13"><circle cx="6.5" cy="6.4" r="5.2" fill="none" stroke="#c8d4e8" stroke-width="1"/><path d="M15.6 3.6h10M18.6 3.6V1.6q0-.5.5-.5h2.8q.5 0 .5.5v2M16.8 3.6v7.2q0 1.1 1.1 1.1h5.2q1.1 0 1.1-1.1V3.6" fill="none" stroke="#e2574c" stroke-width="1.15"/><path d="M19 5.6v4.4M20.5 5.6v4.4M22 5.6v4.4" stroke="#e2574c" stroke-width="1"/></svg>
<div class="t" style="right:1599.80px;top:171.93px;font-size:9.6px;color:#333;letter-spacing:-0.35px;">37</div>
<div class="t" style="left:105.60px;top:171.93px;font-size:9.6px;color:#333;letter-spacing:-0.35px;">02-75 (Consumables)</div>
<div class="t" style="left:218.40px;top:171.93px;font-size:9.6px;color:#777;letter-spacing:-0.35px;">M (Material)</div>
<div class="t" style="left:330.70px;top:171.93px;font-size:9.6px;color:#333;letter-spacing:-0.35px;">General Consumables</div>
<div class="t" style="left:630.30px;top:171.93px;font-size:9.6px;color:#555;letter-spacing:-0.35px;">WEEK</div>
<div class="t" style="right:902.20px;top:171.93px;font-size:9.6px;color:#555;letter-spacing:-0.35px;">60.0000</div>
<div class="t" style="right:827.20px;top:171.93px;font-size:9.6px;color:#555;letter-spacing:-0.35px;">$400.00</div>
<div class="t" style="right:752.00px;top:171.93px;font-size:9.6px;color:#555;letter-spacing:-0.35px;">$24,000.00</div>
<div class="t" style="right:677.30px;top:171.93px;font-size:9.6px;color:#555;letter-spacing:-0.35px;">60.0000</div>
<div class="t" style="right:602.40px;top:171.93px;font-size:9.6px;color:#555;letter-spacing:-0.35px;">$64,000.00</div>
<div class="t" style="right:527.10px;top:171.93px;font-size:9.6px;color:#555;letter-spacing:-0.35px;"></div>
<div class="t" style="right:452.00px;top:171.93px;font-size:9.6px;color:#e03a3a;letter-spacing:-0.35px;">-$40,000.00</div>
<div class="t" style="left:1253.10px;top:171.93px;font-size:9.6px;color:#555;letter-spacing:-0.35px;"></div>
<svg class="a" style="left:5px;top:199px" width="28" height="13" viewBox="0 0 28 13"><circle cx="6.5" cy="6.4" r="5.2" fill="none" stroke="#c8d4e8" stroke-width="1"/><path d="M15.6 3.6h10M18.6 3.6V1.6q0-.5.5-.5h2.8q.5 0 .5.5v2M16.8 3.6v7.2q0 1.1 1.1 1.1h5.2q1.1 0 1.1-1.1V3.6" fill="none" stroke="#e2574c" stroke-width="1.15"/><path d="M19 5.6v4.4M20.5 5.6v4.4M22 5.6v4.4" stroke="#e2574c" stroke-width="1"/></svg>
<div class="t" style="right:1599.80px;top:195.22px;font-size:9.6px;color:#333;letter-spacing:-0.35px;">38</div>
<div class="t" style="left:105.60px;top:195.22px;font-size:9.6px;color:#333;letter-spacing:-0.35px;">02-77 (Small Tools &amp; E...</div>
<div class="t" style="left:218.40px;top:195.22px;font-size:9.6px;color:#777;letter-spacing:-0.35px;">M (Material)</div>
<div class="t" style="left:330.70px;top:195.22px;font-size:9.6px;color:#333;letter-spacing:-0.35px;">Small Tools &amp; equipme...</div>
<div class="t" style="left:630.30px;top:195.22px;font-size:9.6px;color:#555;letter-spacing:-0.35px;">$</div>
<div class="t" style="right:902.20px;top:195.22px;font-size:9.6px;color:#555;letter-spacing:-0.35px;">6,000.0000</div>
<div class="t" style="right:827.20px;top:195.22px;font-size:9.6px;color:#555;letter-spacing:-0.35px;">$1.00</div>
<div class="t" style="right:752.00px;top:195.22px;font-size:9.6px;color:#555;letter-spacing:-0.35px;">$6,000.00</div>
<div class="t" style="right:677.30px;top:195.22px;font-size:9.6px;color:#555;letter-spacing:-0.35px;">6,000.0000</div>
<div class="t" style="right:602.40px;top:195.22px;font-size:9.6px;color:#555;letter-spacing:-0.35px;">$56,000.00</div>
<div class="t" style="right:527.10px;top:195.22px;font-size:9.6px;color:#555;letter-spacing:-0.35px;"></div>
<div class="t" style="right:452.00px;top:195.22px;font-size:9.6px;color:#e03a3a;letter-spacing:-0.35px;">-$50,000.00</div>
<div class="t" style="left:1253.10px;top:195.22px;font-size:9.6px;color:#555;letter-spacing:-0.35px;">18-108-0008 (Demoliti...</div>
<svg class="a" style="left:5px;top:222px" width="28" height="13" viewBox="0 0 28 13"><circle cx="6.5" cy="6.4" r="5.2" fill="none" stroke="#c8d4e8" stroke-width="1"/><path d="M15.6 3.6h10M18.6 3.6V1.6q0-.5.5-.5h2.8q.5 0 .5.5v2M16.8 3.6v7.2q0 1.1 1.1 1.1h5.2q1.1 0 1.1-1.1V3.6" fill="none" stroke="#e2574c" stroke-width="1.15"/><path d="M19 5.6v4.4M20.5 5.6v4.4M22 5.6v4.4" stroke="#e2574c" stroke-width="1"/></svg>
<div class="t" style="right:1599.80px;top:218.51px;font-size:9.6px;color:#333;letter-spacing:-0.35px;">39</div>
<div class="t" style="left:105.60px;top:218.51px;font-size:9.6px;color:#333;letter-spacing:-0.35px;">02-78 (Safety PPE &amp; C...</div>
<div class="t" style="left:218.40px;top:218.51px;font-size:9.6px;color:#777;letter-spacing:-0.35px;">M (Material)</div>
<div class="t" style="left:330.70px;top:218.51px;font-size:9.6px;color:#333;letter-spacing:-0.35px;">Safety Gear- Signs, bar...</div>
<div class="t" style="left:630.30px;top:218.51px;font-size:9.6px;color:#555;letter-spacing:-0.35px;">WEEK</div>
<div class="t" style="right:902.20px;top:218.51px;font-size:9.6px;color:#555;letter-spacing:-0.35px;">60.0000</div>
<div class="t" style="right:827.20px;top:218.51px;font-size:9.6px;color:#555;letter-spacing:-0.35px;">$100.00</div>
<div class="t" style="right:752.00px;top:218.51px;font-size:9.6px;color:#555;letter-spacing:-0.35px;">$6,000.00</div>
<div class="t" style="right:677.30px;top:218.51px;font-size:9.6px;color:#555;letter-spacing:-0.35px;">60.0000</div>
<div class="t" style="right:602.40px;top:218.51px;font-size:9.6px;color:#555;letter-spacing:-0.35px;">$6,000.00</div>
<div class="t" style="right:527.10px;top:218.51px;font-size:9.6px;color:#555;letter-spacing:-0.35px;"></div>
<div class="t" style="left:1253.10px;top:218.51px;font-size:9.6px;color:#555;letter-spacing:-0.35px;"></div>
<svg class="a" style="left:5px;top:245px" width="28" height="13" viewBox="0 0 28 13"><circle cx="6.5" cy="6.4" r="5.2" fill="none" stroke="#c8d4e8" stroke-width="1"/><path d="M15.6 3.6h10M18.6 3.6V1.6q0-.5.5-.5h2.8q.5 0 .5.5v2M16.8 3.6v7.2q0 1.1 1.1 1.1h5.2q1.1 0 1.1-1.1V3.6" fill="none" stroke="#e2574c" stroke-width="1.15"/><path d="M19 5.6v4.4M20.5 5.6v4.4M22 5.6v4.4" stroke="#e2574c" stroke-width="1"/></svg>
<div class="t" style="right:1599.80px;top:241.80px;font-size:9.6px;color:#333;letter-spacing:-0.35px;">40</div>
<div class="t" style="left:105.60px;top:241.80px;font-size:9.6px;color:#333;letter-spacing:-0.35px;">02-78 (Safety PPE &amp; C...</div>
<div class="t" style="left:218.40px;top:241.80px;font-size:9.6px;color:#777;letter-spacing:-0.35px;">M (Material)</div>
<div class="t" style="left:330.70px;top:241.80px;font-size:9.6px;color:#333;letter-spacing:-0.35px;">PPE for each man</div>
<div class="t" style="left:630.30px;top:241.80px;font-size:9.6px;color:#555;letter-spacing:-0.35px;">EACH</div>
<div class="t" style="right:902.20px;top:241.80px;font-size:9.6px;color:#555;letter-spacing:-0.35px;">25.0000</div>
<div class="t" style="right:827.20px;top:241.80px;font-size:9.6px;color:#555;letter-spacing:-0.35px;">$350.00</div>
<div class="t" style="right:752.00px;top:241.80px;font-size:9.6px;color:#555;letter-spacing:-0.35px;">$8,750.00</div>
<div class="t" style="right:677.30px;top:241.80px;font-size:9.6px;color:#555;letter-spacing:-0.35px;">25.0000</div>
<div class="t" style="right:602.40px;top:241.80px;font-size:9.6px;color:#555;letter-spacing:-0.35px;">$8,750.00</div>
<div class="t" style="right:527.10px;top:241.80px;font-size:9.6px;color:#555;letter-spacing:-0.35px;"></div>
<div class="t" style="left:1253.10px;top:241.80px;font-size:9.6px;color:#555;letter-spacing:-0.35px;"></div>
<svg class="a" style="left:5px;top:268px" width="28" height="13" viewBox="0 0 28 13"><circle cx="6.5" cy="6.4" r="5.2" fill="none" stroke="#c8d4e8" stroke-width="1"/><path d="M15.6 3.6h10M18.6 3.6V1.6q0-.5.5-.5h2.8q.5 0 .5.5v2M16.8 3.6v7.2q0 1.1 1.1 1.1h5.2q1.1 0 1.1-1.1V3.6" fill="none" stroke="#e2574c" stroke-width="1.15"/><path d="M19 5.6v4.4M20.5 5.6v4.4M22 5.6v4.4" stroke="#e2574c" stroke-width="1"/></svg>
<div class="t" style="right:1599.80px;top:265.09px;font-size:9.6px;color:#333;letter-spacing:-0.35px;">41</div>
<div class="t" style="left:105.60px;top:265.09px;font-size:9.6px;color:#333;letter-spacing:-0.35px;">02-79 (Fuel)</div>
<div class="t" style="left:218.40px;top:265.09px;font-size:9.6px;color:#3a3a3a;letter-spacing:-0.35px;">E (Equipment)</div>
<div class="t" style="left:330.70px;top:265.09px;font-size:9.6px;color:#333;letter-spacing:-0.35px;">Fuel,oil,lubs for Vehicle...</div>
<div class="t" style="left:630.30px;top:265.09px;font-size:9.6px;color:#555;letter-spacing:-0.35px;">LITRE</div>
<div class="t" style="right:902.20px;top:265.09px;font-size:9.6px;color:#555;letter-spacing:-0.35px;">9,000.0000</div>
<div class="t" style="right:827.20px;top:265.09px;font-size:9.6px;color:#555;letter-spacing:-0.35px;">$1.35</div>
<div class="t" style="right:752.00px;top:265.09px;font-size:9.6px;color:#555;letter-spacing:-0.35px;">$12,150.00</div>
<div class="t" style="right:677.30px;top:265.09px;font-size:9.6px;color:#555;letter-spacing:-0.35px;"></div>
<div class="t" style="right:602.40px;top:265.09px;font-size:9.6px;color:#555;letter-spacing:-0.35px;">$11,000.00</div>
<div class="t" style="right:527.10px;top:265.09px;font-size:9.6px;color:#555;letter-spacing:-0.35px;">9,000.0000</div>
<div class="t" style="right:452.00px;top:265.09px;font-size:9.6px;color:#555;letter-spacing:-0.35px;">$1,150.00</div>
<div class="t" style="left:1253.10px;top:265.09px;font-size:9.6px;color:#555;letter-spacing:-0.35px;"></div>
</div>
<div class="a" style="left:175px;top:596px;width:1690px;height:1px;background:#4a78c8"></div>
<div class="a" style="left:175px;top:597px;width:1690px;height:22px;background:#fff"></div>
<div class="a" style="left:176px;top:597px;width:37px;height:22px;background:#f4f5f8"></div>
<div class="a" style="left:175px;top:597px;width:1px;height:22px;background:#b9c3e6"></div>
<div class="a" style="left:213px;top:597px;width:1px;height:22px;background:#b9c3e6"></div>
<div class="a" style="left:273px;top:597px;width:1px;height:22px;background:#b9c3e6"></div>
<div class="a" style="left:386px;top:597px;width:1px;height:22px;background:#b9c3e6"></div>
<div class="a" style="left:498px;top:597px;width:1px;height:22px;background:#b9c3e6"></div>
<div class="a" style="left:611px;top:597px;width:1px;height:22px;background:#b9c3e6"></div>
<div class="a" style="left:798px;top:597px;width:1px;height:22px;background:#b9c3e6"></div>
<div class="a" style="left:896px;top:597px;width:1px;height:22px;background:#b9c3e6"></div>
<div class="a" style="left:971px;top:597px;width:1px;height:22px;background:#b9c3e6"></div>
<div class="a" style="left:1046px;top:597px;width:1px;height:22px;background:#b9c3e6"></div>
<div class="a" style="left:1121px;top:597px;width:1px;height:22px;background:#b9c3e6"></div>
<div class="a" style="left:1196px;top:597px;width:1px;height:22px;background:#b9c3e6"></div>
<div class="a" style="left:1271px;top:597px;width:1px;height:22px;background:#b9c3e6"></div>
<div class="a" style="left:1346px;top:597px;width:1px;height:22px;background:#b9c3e6"></div>
<div class="a" style="left:1421px;top:597px;width:1px;height:22px;background:#b9c3e6"></div>
<div class="a" style="left:1533px;top:597px;width:1px;height:22px;background:#b9c3e6"></div>
<div class="a" style="left:1721px;top:597px;width:1px;height:22px;background:#b9c3e6"></div>
<div class="a" style="left:175px;top:619px;width:1703px;height:1px;background:#3a4250"></div>
<div class="t" style="left:1053.8px;top:598.30px;font-size:8.8px;color:#555;font-weight:normal;letter-spacing:-0.3px;">$16,088,443....</div>
<div class="t" style="right:638.4000000000001px;top:598.30px;font-size:8.8px;color:#555;font-weight:normal;letter-spacing:-0.3px;">$2,690,366.86</div>
<div class="t" style="left:1354.2px;top:598.30px;font-size:8.8px;color:#555;font-weight:normal;letter-spacing:-0.3px;">$13,398,077....</div>
<svg class="a" style="left:179px;top:629px;" width="16" height="15" viewBox="0 0 16 15"><path d="M13.5 5.5A6 6 0 0 0 2.5 5M2.5 9.5a6 6 0 0 0 11 .5" fill="none" stroke="#a3a9b6" stroke-width="2"/><path d="M14.5 1v5h-5zM1.5 14V9h5z" fill="#a3a9b6"/></svg>
<svg class="a" style="left:201px;top:630px;" width="16" height="14" viewBox="0 0 16 14"><rect x="3.5" y="0.8" width="9" height="4" fill="none" stroke="#a3a9b6" stroke-width="1.3"/><rect x="0.8" y="5" width="14.4" height="5.5" rx="1" fill="#a3a9b6"/><rect x="3.5" y="9" width="9" height="4.2" fill="#fff" stroke="#a3a9b6" stroke-width="1.3"/></svg>
<svg class="a" style="left:225px;top:629px;" width="13" height="16" viewBox="0 0 13 16"><path d="M0.7 0.7h8l3.6 3.6v11H0.7z" fill="none" stroke="#a3a9b6" stroke-width="1"/><text x="3" y="13" font-size="8" fill="#a3a9b6" font-family="Liberation Serif">x</text></svg>
<svg class="a" style="left:247px;top:630px;" width="14" height="14" viewBox="0 0 14 14"><path d="M5 0h4v5h5v4H9v5H5V9H0V5h5z" fill="#6fe05c"/></svg>
<svg class="a" style="left:270px;top:630px;" width="15" height="15" viewBox="0 0 15 15"><rect x="0.7" y="0.7" width="13.6" height="13.6" fill="none" stroke="#a3a9b6" stroke-width="1.2"/><line x1="7.5" y1="0.7" x2="7.5" y2="14.3" stroke="#a3a9b6" stroke-width="1.2"/></svg>
<div class="t" style="left:294.7px;top:627.00px;font-size:9px;color:#999;font-weight:normal;letter-spacing:-0.2px;">Style:</div>
<div class="t" style="left:319.6px;top:627.00px;font-size:9.2px;color:#4a78c8;font-weight:normal;letter-spacing:-0.2px;">Standard</div>
<svg class="a" style="left:360px;top:635px;" width="7" height="4" viewBox="0 0 7 4"><path d="M0 0h7L3.5 4z" fill="#4a78c8"/></svg>
<div class="t" style="left:380.4px;top:627.00px;font-size:9px;color:#999;font-weight:normal;letter-spacing:-0.2px;">Size:</div>
<div class="t" style="left:402px;top:627.00px;font-size:9.2px;color:#4a78c8;font-weight:normal;letter-spacing:-0.2px;">Normal</div>
<svg class="a" style="left:436px;top:635px;" width="7" height="4" viewBox="0 0 7 4"><path d="M0 0h7L3.5 4z" fill="#4a78c8"/></svg>
<div class="t" style="left:455.4px;top:627.00px;font-size:9px;color:#999;font-weight:normal;letter-spacing:-0.2px;">Scale:</div>
<div class="t" style="left:482.2px;top:627.00px;font-size:9.2px;color:#4a78c8;font-weight:normal;letter-spacing:-0.2px;">100%</div>
<svg class="a" style="left:507px;top:635px;" width="7" height="4" viewBox="0 0 7 4"><path d="M0 0h7L3.5 4z" fill="#4a78c8"/></svg>
<div class="t" style="left:527.7px;top:627.00px;font-size:9px;color:#999;font-weight:normal;letter-spacing:-0.2px;">Contrast:</div>
<div class="t" style="left:567.1px;top:627.00px;font-size:9.2px;color:#4a78c8;font-weight:normal;letter-spacing:-0.2px;">Bright</div>
<svg class="a" style="left:596px;top:635px;" width="7" height="4" viewBox="0 0 7 4"><path d="M0 0h7L3.5 4z" fill="#4a78c8"/></svg>
</body></html>
